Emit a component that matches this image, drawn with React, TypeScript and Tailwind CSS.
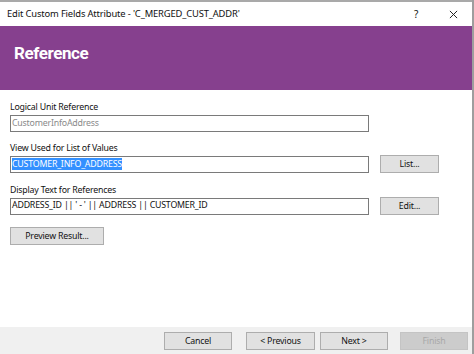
import React from 'react';

const font = { fontFamily: '"Noto Sans", "Open Sans", sans-serif' };

function WinButton({ label, className = '', disabled = false }: { label: string; className?: string; disabled?: boolean }) {
  return (
    <button
      className={`h-[18px] border text-[8.8px] tracking-[-0.2px] leading-none flex items-center justify-center ${
        disabled ? 'bg-[#cccccc] border-[#c4c4c4] text-[#a8a8a8]' : 'bg-[#e1e1e1] border-[#adadad] text-[#111]'
      } ${className}`}
    >
      {label}
    </button>
  );
}

export default function App() {
  return (
    <div className="w-[474px] h-[354px] flex bg-white overflow-hidden" style={font}>
      {/* Dialog window */}
      <div className="w-[472px] h-full flex flex-col">
        <div className="h-[2px] bg-[#a9a9a9]" />

        {/* Title bar */}
        <div className="h-[24px] flex items-center bg-white text-[9.4px] tracking-[-0.15px] text-[#111] pl-[7px]">
          <span className="flex-1">Edit Custom Fields Attribute - 'C_MERGED_CUST_ADDR'</span>
          <span className="w-[10px] text-[10px] mr-[25px]">?</span>
          <svg width="9" height="9" viewBox="0 0 10 10" className="mr-[14px]">
            <path d="M1 1 L9 9 M9 1 L1 9" stroke="#222" strokeWidth="1.1" />
          </svg>
        </div>

        {/* Banner */}
        <div className="h-[64px] bg-[#86408e] pl-[14px] pt-[19px]">
          <h1 className="text-white text-[17px] font-bold leading-none tracking-[-0.4px]" style={{ fontFamily: 'Roboto, sans-serif' }}>
            Reference
          </h1>
        </div>

        {/* Body */}
        <div className="flex-1 bg-white px-[10px] pt-[10px] text-[8.8px] tracking-[-0.2px] text-[#111]">
          <div className="h-[14px] leading-[14px]">Logical Unit Reference</div>
          <div className="mt-[1px] w-[359px] h-[17px] border border-[#7a7a7a] flex items-center pl-[1px] text-[#8a8a8a]">
            CustomerInfoAddress
          </div>

          <div className="mt-[9px] h-[14px] leading-[14px]">View Used for List of Values</div>
          <div className="flex items-center">
            <div className="w-[359px] h-[17px] border border-[#7a7a7a] flex items-center pl-[1px]">
              <span className="bg-[#3390ff] text-white leading-[12px]">CUSTOMER_INFO_ADDRESS</span>
            </div>
            <WinButton label="List..." className="ml-[11px] w-[59px]" />
          </div>

          <div className="mt-[10px] h-[14px] leading-[14px]">Display Text for References</div>
          <div className="flex items-center">
            <div className="w-[359px] h-[17px] border border-[#7a7a7a] flex items-center pl-[1px]">
              ADDRESS_ID || ' - ' || ADDRESS || CUSTOMER_ID
            </div>
            <WinButton label="Edit..." className="ml-[11px] w-[59px]" />
          </div>

          <WinButton label="Preview Result..." className="mt-[12px] w-[94px]" />
        </div>

        {/* Footer */}
        <div className="h-[27px] bg-[#f0f0f0] flex items-start pt-[5px] pl-[164px]">
          <WinButton label="Cancel" className="w-[68px]" />
          <WinButton label="< Previous" className="ml-[14px] w-[69px]" />
          <WinButton label="Next >" className="ml-[5px] w-[68px]" />
          <WinButton label="Finish" disabled className="ml-[12px] w-[68px]" />
        </div>
      </div>

      {/* Edge of the window behind */}
      <div className="w-[2px] h-full bg-[#9e9e9e]" />
    </div>
  );
}
